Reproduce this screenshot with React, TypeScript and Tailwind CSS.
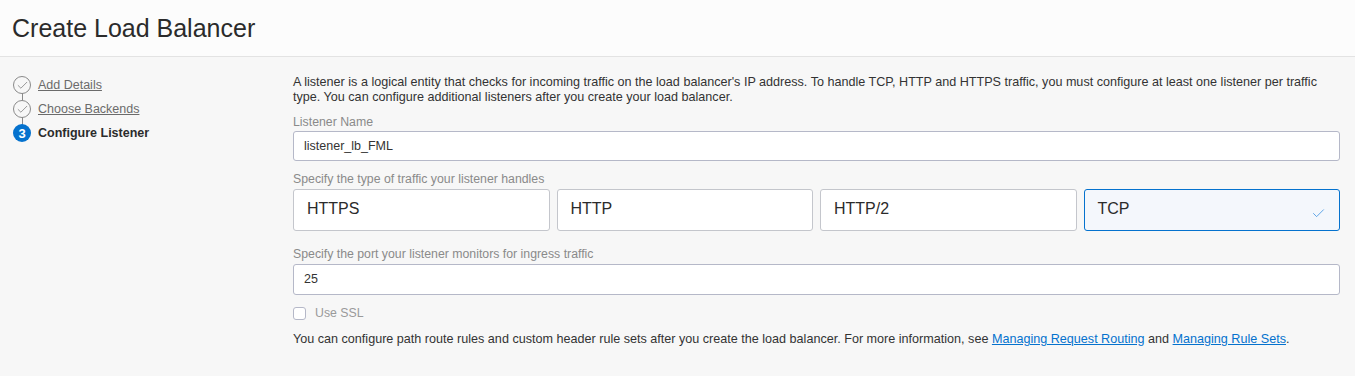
import { Check } from 'lucide-react'

const steps = [
    { label: 'Add Details', done: true },
    { label: 'Choose Backends', done: true },
    { label: 'Configure Listener', done: false },
]

const traffic = ['HTTPS', 'HTTP', 'HTTP/2', 'TCP']

function StepIcon({ done, n }: { done: boolean; n: number }) {
    if (!done) {
        return (
            <div className="w-[18px] h-[18px] rounded-full bg-[#0572ce] text-white text-[13px] font-bold flex items-center justify-center leading-none">
                {n}
            </div>
        )
    }
    return (
        <div className="w-[18px] h-[18px] rounded-full border border-[#8a8a8a] bg-[#f7f7f7] flex items-center justify-center text-[#707070]">
            <Check size={13} strokeWidth={1.3} />
        </div>
    )
}

export default function App() {
    return (
        <div className="min-h-[376px] bg-[#f7f7f7] font-['Liberation_Sans',Arial,sans-serif] text-[#333]">
            <div className="h-[57px] bg-[#fcfcfc] border-b border-[#e3e3e3] flex items-center px-3">
                <h1 className="text-[25px] text-[#2b2b2b] leading-none pt-[1px]">Create Load Balancer</h1>
            </div>

            <div className="flex">
                <div className="w-[293px] shrink-0 pl-[13px] pt-[16px]">
                    {steps.map((s, i) => (
                        <div key={s.label} className="relative flex items-center gap-[7px] h-[24px]">
                            {i < steps.length - 1 && (
                                <div className="absolute left-[9px] top-[20px] h-[8px] w-px bg-[#8a8a8a]" />
                            )}
                            <StepIcon done={s.done} n={i + 1} />
                            {s.done ? (
                                <span className="text-[12.5px] text-[#6b6b6b] underline">{s.label}</span>
                            ) : (
                                <span className="text-[12.5px] text-[#2b2b2b] font-bold">{s.label}</span>
                            )}
                        </div>
                    ))}
                </div>

                <div className="flex-1 pr-[15px] pt-[18px]">
                    <p className="text-[12.6px] leading-[15px] text-[#333]">
                        A listener is a logical entity that checks for incoming traffic on the load balancer's IP address. To handle TCP, HTTP and HTTPS traffic, you must configure at least one listener per traffic type. You can configure additional listeners after you create your load balancer.
                    </p>

                    <div className="mt-[9px] text-[12.3px] leading-[16px] text-[#8a8a8a]">Listener Name</div>
                    <div className="mt-[1px] h-[30px] bg-white border border-[#b5b8c8] rounded-[3px] flex items-center px-[10px] text-[12.5px] text-[#333]">
                        listener_lb_FML
                    </div>

                    <div className="mt-[10px] text-[12.3px] leading-[16px] text-[#8a8a8a]">
                        Specify the type of traffic your listener handles
                    </div>
                    <div className="mt-[2px] grid grid-cols-4 gap-[7px]">
                        {traffic.map((t) => {
                            const on = t === 'TCP'
                            return (
                                <div
                                    key={t}
                                    className={
                                        on
                                            ? 'h-[42px] rounded-[3px] border border-[#0572ce] bg-[#f4f7fc] flex items-center justify-between pl-[13px] pr-[13px] text-[16px] text-[#2b2b2b]'
                                            : 'h-[42px] rounded-[3px] border border-[#c4c6cc] bg-white flex items-center pl-[13px] text-[16px] text-[#2b2b2b]'
                                    }
                                >
                                    <span className="pb-[2px]">{t}</span>
                                    {on && <Check size={15} strokeWidth={1.2} className="text-[#2f8be0] mt-[6px]" />}
                                </div>
                            )
                        })}
                    </div>

                    <div className="mt-[15px] text-[12.3px] leading-[16px] text-[#8a8a8a]">
                        Specify the port your listener monitors for ingress traffic
                    </div>
                    <div className="mt-[2px] h-[31px] bg-white border border-[#b5b8c8] rounded-[3px] flex items-center px-[10px] text-[12.5px] text-[#333]">
                        25
                    </div>

                    <label className="mt-[10px] flex items-center gap-[9px] h-[16px]">
                        <span className="w-[13px] h-[13px] rounded-[3px] border border-[#b5b8c8] bg-white" />
                        <span className="text-[12.3px] text-[#9a9a9a]">Use SSL</span>
                    </label>

                    <p className="mt-[10px] text-[12.6px] leading-[16px] text-[#333]">
                        You can configure path route rules and custom header rule sets after you create the load balancer. For more information, see{' '}
                        <a className="text-[#0572ce] underline">Managing Request Routing</a> and{' '}
                        <a className="text-[#0572ce] underline">Managing Rule Sets</a>.
                    </p>
                </div>
            </div>
        </div>
    )
}
